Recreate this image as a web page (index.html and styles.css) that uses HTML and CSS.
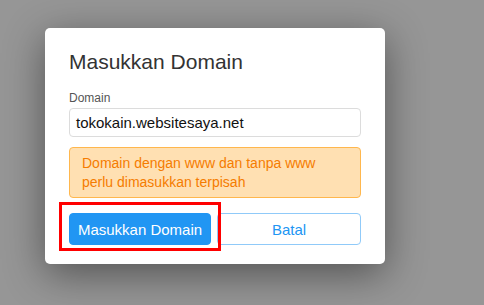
FILE: index.html
```html
<!DOCTYPE html>
<html>
<head>
<meta charset="utf-8">
<link rel="stylesheet" href="styles.css">
</head>
<body>
<div class="backdrop">
  <div class="modal">
    <h1 class="title">Masukkan Domain</h1>
    <label class="label">Domain</label>
    <div class="input">tokokain.websitesaya.net</div>
    <div class="alert">Domain dengan www dan tanpa www<br>perlu dimasukkan terpisah</div>
    <div class="actions">
      <button class="btn btn-primary">Masukkan Domain</button>
      <button class="btn btn-outline">Batal</button>
      <div class="highlight"></div>
    </div>
  </div>
</div>
</body>
</html>
```
FILE: styles.css
```css
html, body {
  margin: 0;
  padding: 0;
  width: 484px;
  height: 305px;
  overflow: hidden;
  font-family: "Liberation Sans", Arial, sans-serif;
}
.backdrop {
  width: 484px;
  height: 305px;
  background: #969696;
  padding: 28px 0 0 45px;
  box-sizing: border-box;
}
.modal {
  width: 340px;
  box-sizing: border-box;
  background: #fff;
  border-radius: 5px;
  padding: 22px 24px 19px 24px;
  box-shadow: 0 10px 40px rgba(0,0,0,0.45);
}
.title {
  margin: 0;
  font-size: 21px;
  font-weight: normal;
  color: #333;
  line-height: 24px;
}
.label {
  display: block;
  margin-top: 17px;
  font-size: 12px;
  line-height: 14px;
  color: #555;
}
.input {
  margin-top: 3px;
  height: 29px;
  box-sizing: border-box;
  border: 1px solid #dcdcdc;
  border-radius: 4px;
  padding: 0 6px;
  font-size: 15px;
  line-height: 27px;
  color: #111;
}
.alert {
  margin-top: 10px;
  background: #ffe0b2;
  border: 1px solid #ffb74d;
  border-radius: 4px;
  padding: 6px 12px 5px 12px;
  font-size: 14px;
  line-height: 19px;
  color: #f57c00;
}
.actions {
  position: relative;
  display: flex;
  margin-top: 15px;
}
.btn {
  height: 32px;
  box-sizing: border-box;
  font-family: "Liberation Sans", Arial, sans-serif;
  font-size: 15px;
  border-radius: 4px;
  cursor: pointer;
}
.btn-primary {
  width: 142px;
  background: #2196f3;
  border: 1px solid #2196f3;
  color: #fff;
  padding: 0;
}
.btn-outline {
  flex: 1;
  margin-left: 6px;
  background: #fff;
  border: 1px solid #90caf9;
  color: #2196f3;
  padding: 0;
}
.highlight {
  position: absolute;
  left: -10px;
  top: -11px;
  width: 162px;
  height: 49px;
  box-sizing: border-box;
  border: 3px solid #f00;
  pointer-events: none;
}
```
